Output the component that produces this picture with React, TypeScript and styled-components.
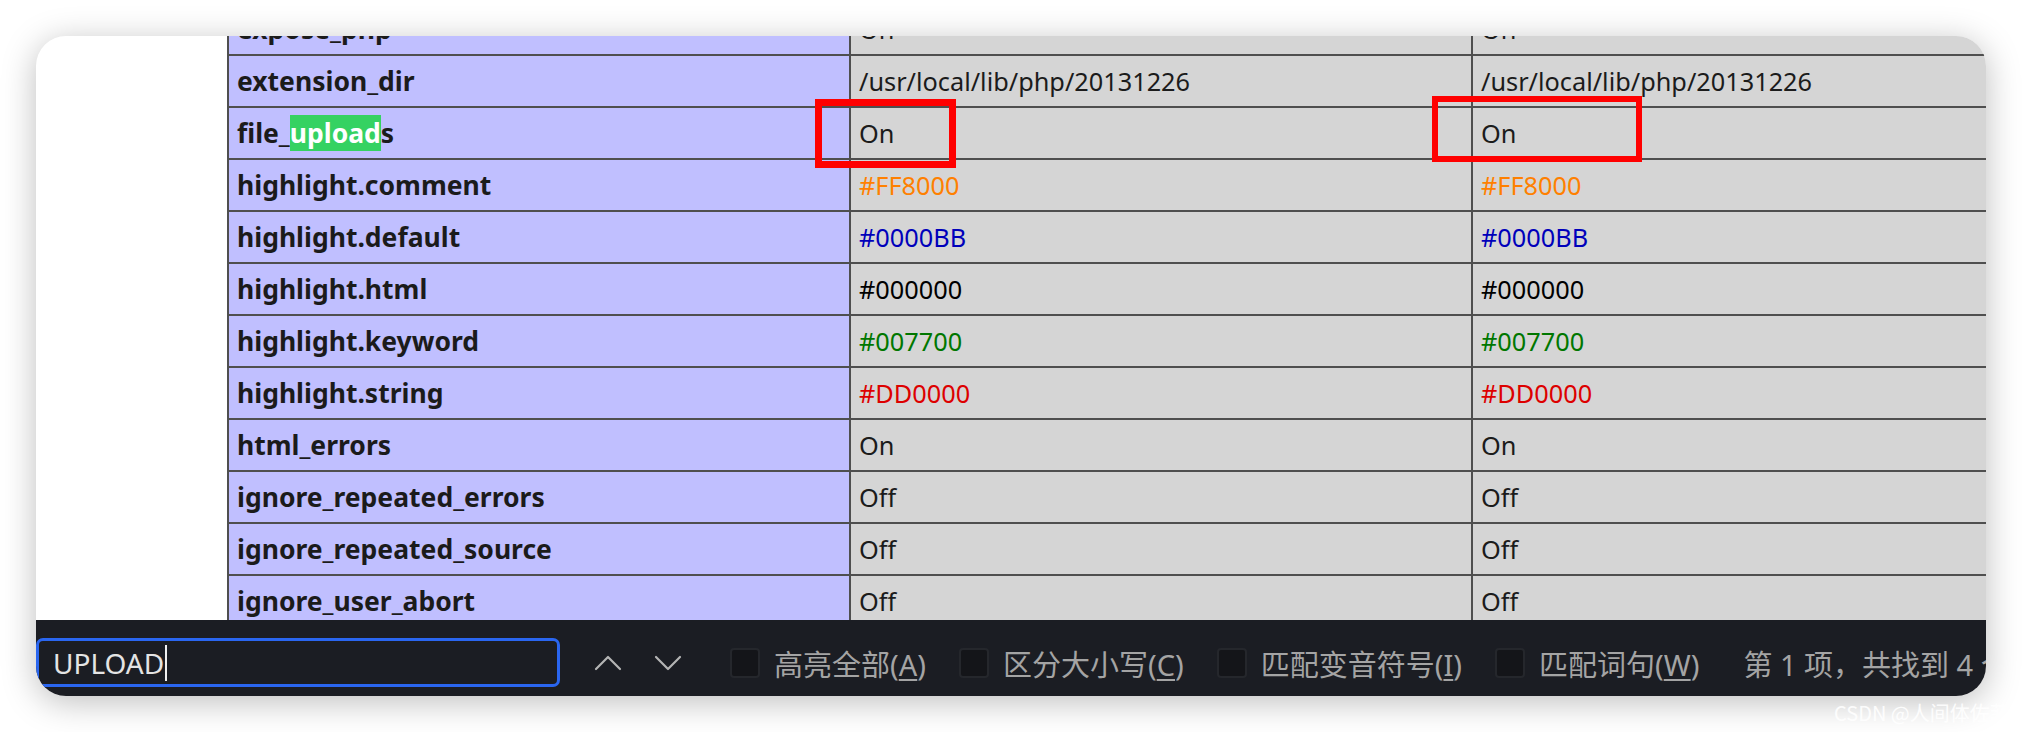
import React from 'react';
import styled, { createGlobalStyle } from 'styled-components';

const Global = createGlobalStyle`
  html, body { margin: 0; padding: 0; background: #ffffff; }
  body { width: 2022px; height: 732px; overflow: hidden; font-family: "Noto Sans", sans-serif; }
`;

const Stage = styled.div`
  position: relative;
  width: 2022px;
  height: 732px;
  box-sizing: border-box;
  padding: 36px;
`;

const Card = styled.div`
  width: 1950px;
  height: 660px;
  border-radius: 30px;
  overflow: hidden;
  background: #ffffff;
  box-shadow: 0 6px 34px rgba(0, 0, 0, 0.26);
  display: flex;
  flex-direction: column;
`;

const Viewport = styled.div`
  flex: 1;
  min-height: 0;
  overflow: hidden;
  padding-left: 191px;
`;

const Grid = styled.div`
  display: grid;
  grid-template-columns: repeat(3, 622px);
  grid-auto-rows: 52px;
  margin-top: -32px;
  border-left: 2px solid #4f4f4f;
  font-family: "Noto Sans", sans-serif;
`;

const Cell = styled.div<{ $name?: boolean; $color?: string }>`
  box-sizing: border-box;
  display: flex;
  align-items: center;
  padding: 0 8px;
  border-right: 2px solid #4f4f4f;
  border-bottom: 2px solid #4f4f4f;
  white-space: nowrap;
  overflow: hidden;
  background: ${(p) => (p.$name ? '#c0bfff' : '#d5d5d5')};
  font-weight: ${(p) => (p.$name ? 700 : 400)};
  font-size: ${(p) => (p.$name ? '26.5px' : '25.3px')};
  color: ${(p) => p.$color || '#1b1b1b'};
`;

const Mark = styled.span`
  background: #35d262;
  color: #ffffff;
`;

const Annot = styled.div<{ $w: number }>`
  position: absolute;
  box-sizing: border-box;
  border: ${(p) => p.$w}px solid #ff0000;
`;

const Toolbar = styled.div`
  height: 76px;
  flex: none;
  background: #1b1d23;
  box-sizing: border-box;
  padding-top: 18px;
  display: flex;
  align-items: flex-start;
  font-family: "Noto Sans", "Noto Sans CJK SC", sans-serif;
  font-size: 29px;
  & > * { flex-shrink: 0; }
`;

const Row = styled.div`
  height: 49px;
  display: flex;
  align-items: center;
  flex-shrink: 0;
`;

const SearchBox = styled.div`
  width: 524px;
  height: 49px;
  flex-shrink: 0;
  box-sizing: border-box;
  border: 3px solid #2a66f0;
  border-radius: 7px;
  padding-left: 14px;
  display: flex;
  align-items: center;
  color: #e4e4e4;
  font-size: 28px;
`;

const Caret = styled.span`
  display: inline-block;
  width: 0;
  height: 36px;
  border-left: 2px solid #f0f0f0;
  margin-left: 1px;
`;

const NavGroup = styled(Row)`
  margin-left: 26px;
  gap: 16px;
`;

const NavButton = styled.div`
  width: 44px;
  height: 49px;
  display: flex;
  align-items: center;
  justify-content: center;
`;

const Options = styled(Row)`
  margin-left: 40px;
  gap: 33px;
`;

const Option = styled.div`
  display: flex;
  align-items: center;
  gap: 14px;
  flex-shrink: 0;
`;

const Box = styled.span`
  width: 30px;
  height: 30px;
  flex-shrink: 0;
  box-sizing: border-box;
  background: #141519;
  border: 2px solid #25272c;
  border-radius: 4px;
`;

const Label = styled.span`
  color: #a4a4a4;
  white-space: nowrap;
  flex-shrink: 0;
  u { text-underline-offset: 3px; }
`;

const Result = styled(Label)`
  margin-left: 11px;
`;

const Watermark = styled.div`
  position: absolute;
  left: 1834px;
  top: 698px;
  font-family: "Noto Sans CJK SC", sans-serif;
  font-size: 20px;
  color: rgba(255, 255, 255, 0.9);
  white-space: nowrap;
`;

type Rec = { name: React.ReactNode; value: string; color?: string };

const rows: Rec[] = [
  { name: 'expose_php', value: 'On' },
  { name: 'extension_dir', value: '/usr/local/lib/php/20131226' },
  { name: <>file_<Mark>upload</Mark>s</>, value: 'On' },
  { name: 'highlight.comment', value: '#FF8000', color: '#ff8000' },
  { name: 'highlight.default', value: '#0000BB', color: '#0000bb' },
  { name: 'highlight.html', value: '#000000', color: '#000000' },
  { name: 'highlight.keyword', value: '#007700', color: '#007700' },
  { name: 'highlight.string', value: '#DD0000', color: '#dd0000' },
  { name: 'html_errors', value: 'On' },
  { name: 'ignore_repeated_errors', value: 'Off' },
  { name: 'ignore_repeated_source', value: 'Off' },
  { name: 'ignore_user_abort', value: 'Off' },
];

const Chevron = ({ up }: { up?: boolean }) => (
  <svg width="28" height="16" viewBox="0 0 28 16" fill="none">
    <polyline
      points={up ? '2,14 14,2 26,14' : '2,2 14,14 26,2'}
      stroke="#b4b4b4"
      strokeWidth="2.2"
      strokeLinecap="round"
      strokeLinejoin="round"
    />
  </svg>
);

const options: [string, string][] = [
  ['高亮全部', 'A'],
  ['区分大小写', 'C'],
  ['匹配变音符号', 'I'],
  ['匹配词句', 'W'],
];

export default function App() {
  return (
    <>
      <Global />
      <Stage>
        <Card>
          <Viewport>
            <Grid>
              {rows.map((r, i) => (
                <React.Fragment key={i}>
                  <Cell $name>{r.name}</Cell>
                  <Cell $color={r.color}>{r.value}</Cell>
                  <Cell $color={r.color}>{r.value}</Cell>
                </React.Fragment>
              ))}
            </Grid>
          </Viewport>
          <Toolbar>
            <SearchBox>
              UPLOAD<Caret />
            </SearchBox>
            <NavGroup>
              <NavButton><Chevron up /></NavButton>
              <NavButton><Chevron /></NavButton>
            </NavGroup>
            <Options>
              {options.map(([t, k]) => (
                <Option key={k}>
                  <Box />
                  <Label>
                    {t}(<u>{k}</u>)
                  </Label>
                </Option>
              ))}
              <Result>第 1 项，共找到 4 个匹配项</Result>
            </Options>
          </Toolbar>
        </Card>
        <Annot $w={7} style={{ left: 815, top: 99, width: 141, height: 69 }} />
        <Annot $w={6} style={{ left: 1432, top: 96, width: 210, height: 66 }} />
        <Watermark>CSDN @人间体佐菲</Watermark>
      </Stage>
    </>
  );
}
